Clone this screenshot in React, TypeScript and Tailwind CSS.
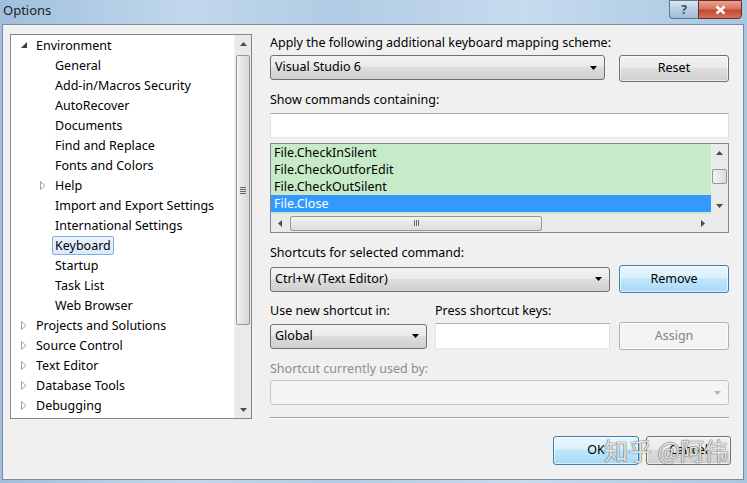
import type { ReactNode } from "react";

// ── Tree data ─────────────────────────────────────────────────────────────────

interface TreeNode {
  label: string;
  level: number;
  expander?: "open" | "closed";
  selected?: boolean;
}

const TREE: TreeNode[] = [
  { label: "Environment", level: 0, expander: "open" },
  { label: "General", level: 1 },
  { label: "Add-in/Macros Security", level: 1 },
  { label: "AutoRecover", level: 1 },
  { label: "Documents", level: 1 },
  { label: "Find and Replace", level: 1 },
  { label: "Fonts and Colors", level: 1 },
  { label: "Help", level: 1, expander: "closed" },
  { label: "Import and Export Settings", level: 1 },
  { label: "International Settings", level: 1 },
  { label: "Keyboard", level: 1, selected: true },
  { label: "Startup", level: 1 },
  { label: "Task List", level: 1 },
  { label: "Web Browser", level: 1 },
  { label: "Projects and Solutions", level: 0, expander: "closed" },
  { label: "Source Control", level: 0, expander: "closed" },
  { label: "Text Editor", level: 0, expander: "closed" },
  { label: "Database Tools", level: 0, expander: "closed" },
  { label: "Debugging", level: 0, expander: "closed" },
];

const COMMANDS = [
  "File.CheckInSilent",
  "File.CheckOutforEdit",
  "File.CheckOutSilent",
  "File.Close",
];

// ── Small pieces ──────────────────────────────────────────────────────────────

function Arrow({ dir, className = "fill-[#4d4d4d]" }: { dir: "up" | "down" | "left" | "right"; className?: string }) {
  const pts = {
    up: "0,4 3.5,0 7,4",
    down: "0,0 7,0 3.5,4",
    left: "4,0 4,7 0,3.5",
    right: "0,0 0,7 4,3.5",
  }[dir];
  const vertical = dir === "up" || dir === "down";
  return (
    <svg width={vertical ? 7 : 4} height={vertical ? 4 : 7} className={className}>
      <polygon points={pts} />
    </svg>
  );
}

function Expander({ kind }: { kind?: "open" | "closed" }) {
  if (kind === "open")
    return (
      <svg width="7" height="7" className="fill-[#3c3c3c]">
        <polygon points="6,0 6,6 0,6" />
      </svg>
    );
  if (kind === "closed")
    return (
      <svg width="6" height="9" className="fill-none stroke-[#a0a0a0]">
        <polygon points="0.5,0.5 5,4.5 0.5,8.5" />
      </svg>
    );
  return null;
}

function Combo({ value, className = "", disabled = false }: { value?: string; className?: string; disabled?: boolean }) {
  return (
    <div
      className={
        "flex h-[25px] items-center justify-between rounded-[3px] border pl-[4px] pr-[7px] " +
        (disabled
          ? "border-[#c5c5c5] bg-[#f4f4f4] "
          : "border-[#707070] bg-[linear-gradient(#f2f2f2_0%,#ebebeb_45%,#dddddd_50%,#cfcfcf_100%)] ") +
        className
      }
    >
      <span className="text-black">{value}</span>
      <Arrow dir="down" className={disabled ? "fill-[#b5b5b5]" : "fill-black"} />
    </div>
  );
}

function Button({ children, variant = "normal", className = "" }: { children: ReactNode; variant?: "normal" | "hot" | "disabled"; className?: string }) {
  const look = {
    normal: "border-[#707070] bg-[linear-gradient(#f2f2f2_0%,#ebebeb_45%,#dddddd_50%,#cfcfcf_100%)] text-black",
    hot: "border-[#3c7fb1] bg-[linear-gradient(#eaf6fd_0%,#d9f0fc_45%,#bee6fd_50%,#a7d9f5_100%)] text-black",
    disabled: "border-[#adb2b5] bg-[#f4f4f4] text-[#838383]",
  }[variant];
  return (
    <div className={"flex items-center justify-center rounded-[3px] border shadow-[inset_0_0_0_1px_rgba(255,255,255,0.6)] " + look + " " + className}>
      {children}
    </div>
  );
}

function TextBox({ className = "" }: { className?: string }) {
  return <div className={"border border-[#abadb3] border-b-[#e3e9ef] border-l-[#e2e3ea] border-r-[#dbdfe6] bg-white " + className} />;
}

// ── Panels ────────────────────────────────────────────────────────────────────

function CategoryTree() {
  return (
    <div className="flex h-[385px] w-[242px] shrink-0 border border-[#828790] bg-white">
      <div className="flex-1">
        {TREE.map((n) => (
          <div
            key={n.label}
            className="flex h-[20px] items-center"
            style={{ paddingLeft: 10 + n.level * 19 }}
          >
            <div className="flex w-[12px] items-center">
              <Expander kind={n.expander} />
            </div>
            <span
              className={
                "rounded-[2px] border px-[2px] leading-[17px] " +
                (n.selected
                  ? "border-[#84acdd] bg-[linear-gradient(#eaf3fd,#dbe9fb)]"
                  : "border-transparent")
              }
            >
              {n.label}
            </span>
          </div>
        ))}
      </div>

      {/* vertical scrollbar */}
      <div className="flex w-[17px] flex-col bg-[#eaeaea] border-l border-[#f0f0f0]">
        <div className="flex h-[17px] items-center justify-center">
          <Arrow dir="up" />
        </div>
        <div className="mx-[1px] mt-[3px] flex h-[270px] items-center justify-center rounded-[2px] border border-[#979797] bg-[linear-gradient(90deg,#f3f3f3,#e2e2e2_50%,#d6d6d6)]">
          <div className="flex flex-col gap-[1px]">
            <div className="h-px w-[6px] bg-[#666]" />
            <div className="h-px w-[6px] bg-[#666]" />
            <div className="h-px w-[6px] bg-[#666]" />
            <div className="h-px w-[6px] bg-[#666]" />
          </div>
        </div>
        <div className="flex-1" />
        <div className="flex h-[17px] items-center justify-center">
          <Arrow dir="down" />
        </div>
      </div>
    </div>
  );
}

function CommandList() {
  return (
    <div className="flex h-[90px] flex-col border border-[#828790] bg-[#f0f0f0]">
      <div className="flex h-[70px]">
        <div className="flex-1 bg-[#c7ebc9]">
          {COMMANDS.map((c) => (
            <div
              key={c}
              className={
                "h-[17px] pl-[3px] leading-[17px] " +
                (c === "File.Close" ? "bg-[#3399ff] text-white" : "text-black")
              }
            >
              {c}
            </div>
          ))}
        </div>
        <div className="flex w-[17px] flex-col bg-[#eaeaea]">
          <div className="flex h-[17px] items-center justify-center">
            <Arrow dir="up" />
          </div>
          <div className="mx-[1px] mt-[8px] h-[15px] rounded-[2px] border border-[#979797] bg-[linear-gradient(90deg,#f3f3f3,#dcdcdc)]" />
          <div className="flex-1" />
          <div className="flex h-[17px] items-center justify-center">
            <Arrow dir="down" />
          </div>
        </div>
      </div>
      {/* horizontal scrollbar */}
      <div className="flex h-[18px] items-center bg-[#eaeaea] pr-[17px]">
        <div className="flex w-[17px] items-center justify-center">
          <Arrow dir="left" />
        </div>
        <div className="ml-[2px] flex h-[15px] w-[252px] items-center justify-center rounded-[2px] border border-[#979797] bg-[linear-gradient(#f3f3f3,#dcdcdc)]">
          <div className="flex gap-[1px]">
            <div className="h-[6px] w-px bg-[#666]" />
            <div className="h-[6px] w-px bg-[#666]" />
            <div className="h-[6px] w-px bg-[#666]" />
          </div>
        </div>
        <div className="flex-1" />
        <div className="flex w-[17px] items-center justify-center">
          <Arrow dir="right" />
        </div>
      </div>
    </div>
  );
}

// ── Dialog ────────────────────────────────────────────────────────────────────

export default function App() {
  return (
    <div className="relative flex h-[483px] w-[747px] flex-col overflow-hidden bg-[linear-gradient(90deg,#9fbfdc_0%,#c2d8ec_25%,#b1cbe4_45%,#c6dbee_70%,#a9c6e1_100%)] font-['Noto_Sans',sans-serif] text-[12.5px] text-black">
      {/* Title bar */}
      <div className="flex h-[24px] shrink-0 items-start justify-between">
        <span className="pl-[3px] pt-[1px] text-[13px] text-[#1e1e1e]">Options</span>
        <div className="mr-[5px] flex">
          <div className="flex h-[19px] w-[29px] items-center justify-center rounded-bl-[4px] border border-r-0 border-[#5c7590] bg-[linear-gradient(#dde8f3,#b7cde2_50%,#a3bcd6)] text-[12px] font-bold text-[#3d4f63]">
            ?
          </div>
          <div className="flex h-[19px] w-[44px] items-center justify-center rounded-br-[4px] border border-[#6b2a20] bg-[linear-gradient(#e8a493,#d7735e_45%,#c44a32_55%,#d2725a)]">
            <svg width="11" height="10" className="stroke-white" strokeWidth="2.4">
              <line x1="1.5" y1="1.5" x2="9.5" y2="8.5" />
              <line x1="9.5" y1="1.5" x2="1.5" y2="8.5" />
            </svg>
          </div>
        </div>
      </div>

      {/* Client area */}
      <div className="mb-[3px] ml-[2px] mr-[3px] flex flex-1 border border-[#7a8ea3] bg-[#f0f0f0]">
        <div className="ml-[7px] mt-[9px]">
          <CategoryTree />
        </div>

        <div className="ml-[18px] flex w-[459px] flex-col pt-[10px]">
          <div className="leading-[16px]">Apply the following additional keyboard mapping scheme:</div>
          <div className="mt-[4px] flex items-start justify-between">
            <Combo value="Visual Studio 6" className="w-[335px]" />
            <Button className="h-[27px] w-[110px]">Reset</Button>
          </div>

          <div className="mt-[10px] leading-[16px]">Show commands containing:</div>
          <TextBox className="mt-[5px] h-[25px]" />

          <div className="mt-[5px]">
            <CommandList />
          </div>

          <div className="mt-[12px] leading-[16px]">Shortcuts for selected command:</div>
          <div className="mt-[4px] flex items-center justify-between">
            <Combo value="Ctrl+W (Text Editor)" className="w-[340px]" />
            <Button variant="hot" className="h-[28px] w-[110px]">Remove</Button>
          </div>

          <div className="mt-[10px] flex leading-[16px]">
            <span className="w-[165px]">Use new shortcut in:</span>
            <span>Press shortcut keys:</span>
          </div>
          <div className="mt-[3px] flex items-center">
            <Combo value="Global" className="w-[157px]" />
            <TextBox className="ml-[8px] h-[26px] w-[175px]" />
            <Button variant="disabled" className="ml-auto h-[28px] w-[110px]">Assign</Button>
          </div>

          <div className="mt-[11px] leading-[16px] text-[#8d8d8d]">Shortcut currently used by:</div>
          <Combo disabled className="mt-[3px]" />

          <div className="mt-[12px] h-[2px] border-t border-b border-t-[#a0a0a0] border-b-white" />

          <div className="mr-[-2px] mt-[17px] flex justify-end gap-[7px]">
            <Button variant="hot" className="h-[29px] w-[86px]">OK</Button>
            <Button className="h-[29px] w-[85px]">Cancel</Button>
          </div>
        </div>
      </div>

      {/* site watermark */}
      <span className="pointer-events-none absolute left-[604px] top-[432px] font-['Noto_Sans_CJK_SC',sans-serif] text-[24px] text-white/85 [text-shadow:0_0_1px_#444,0_0_1px_#444]">
        知乎 @阿伟
      </span>
    </div>
  );
}
